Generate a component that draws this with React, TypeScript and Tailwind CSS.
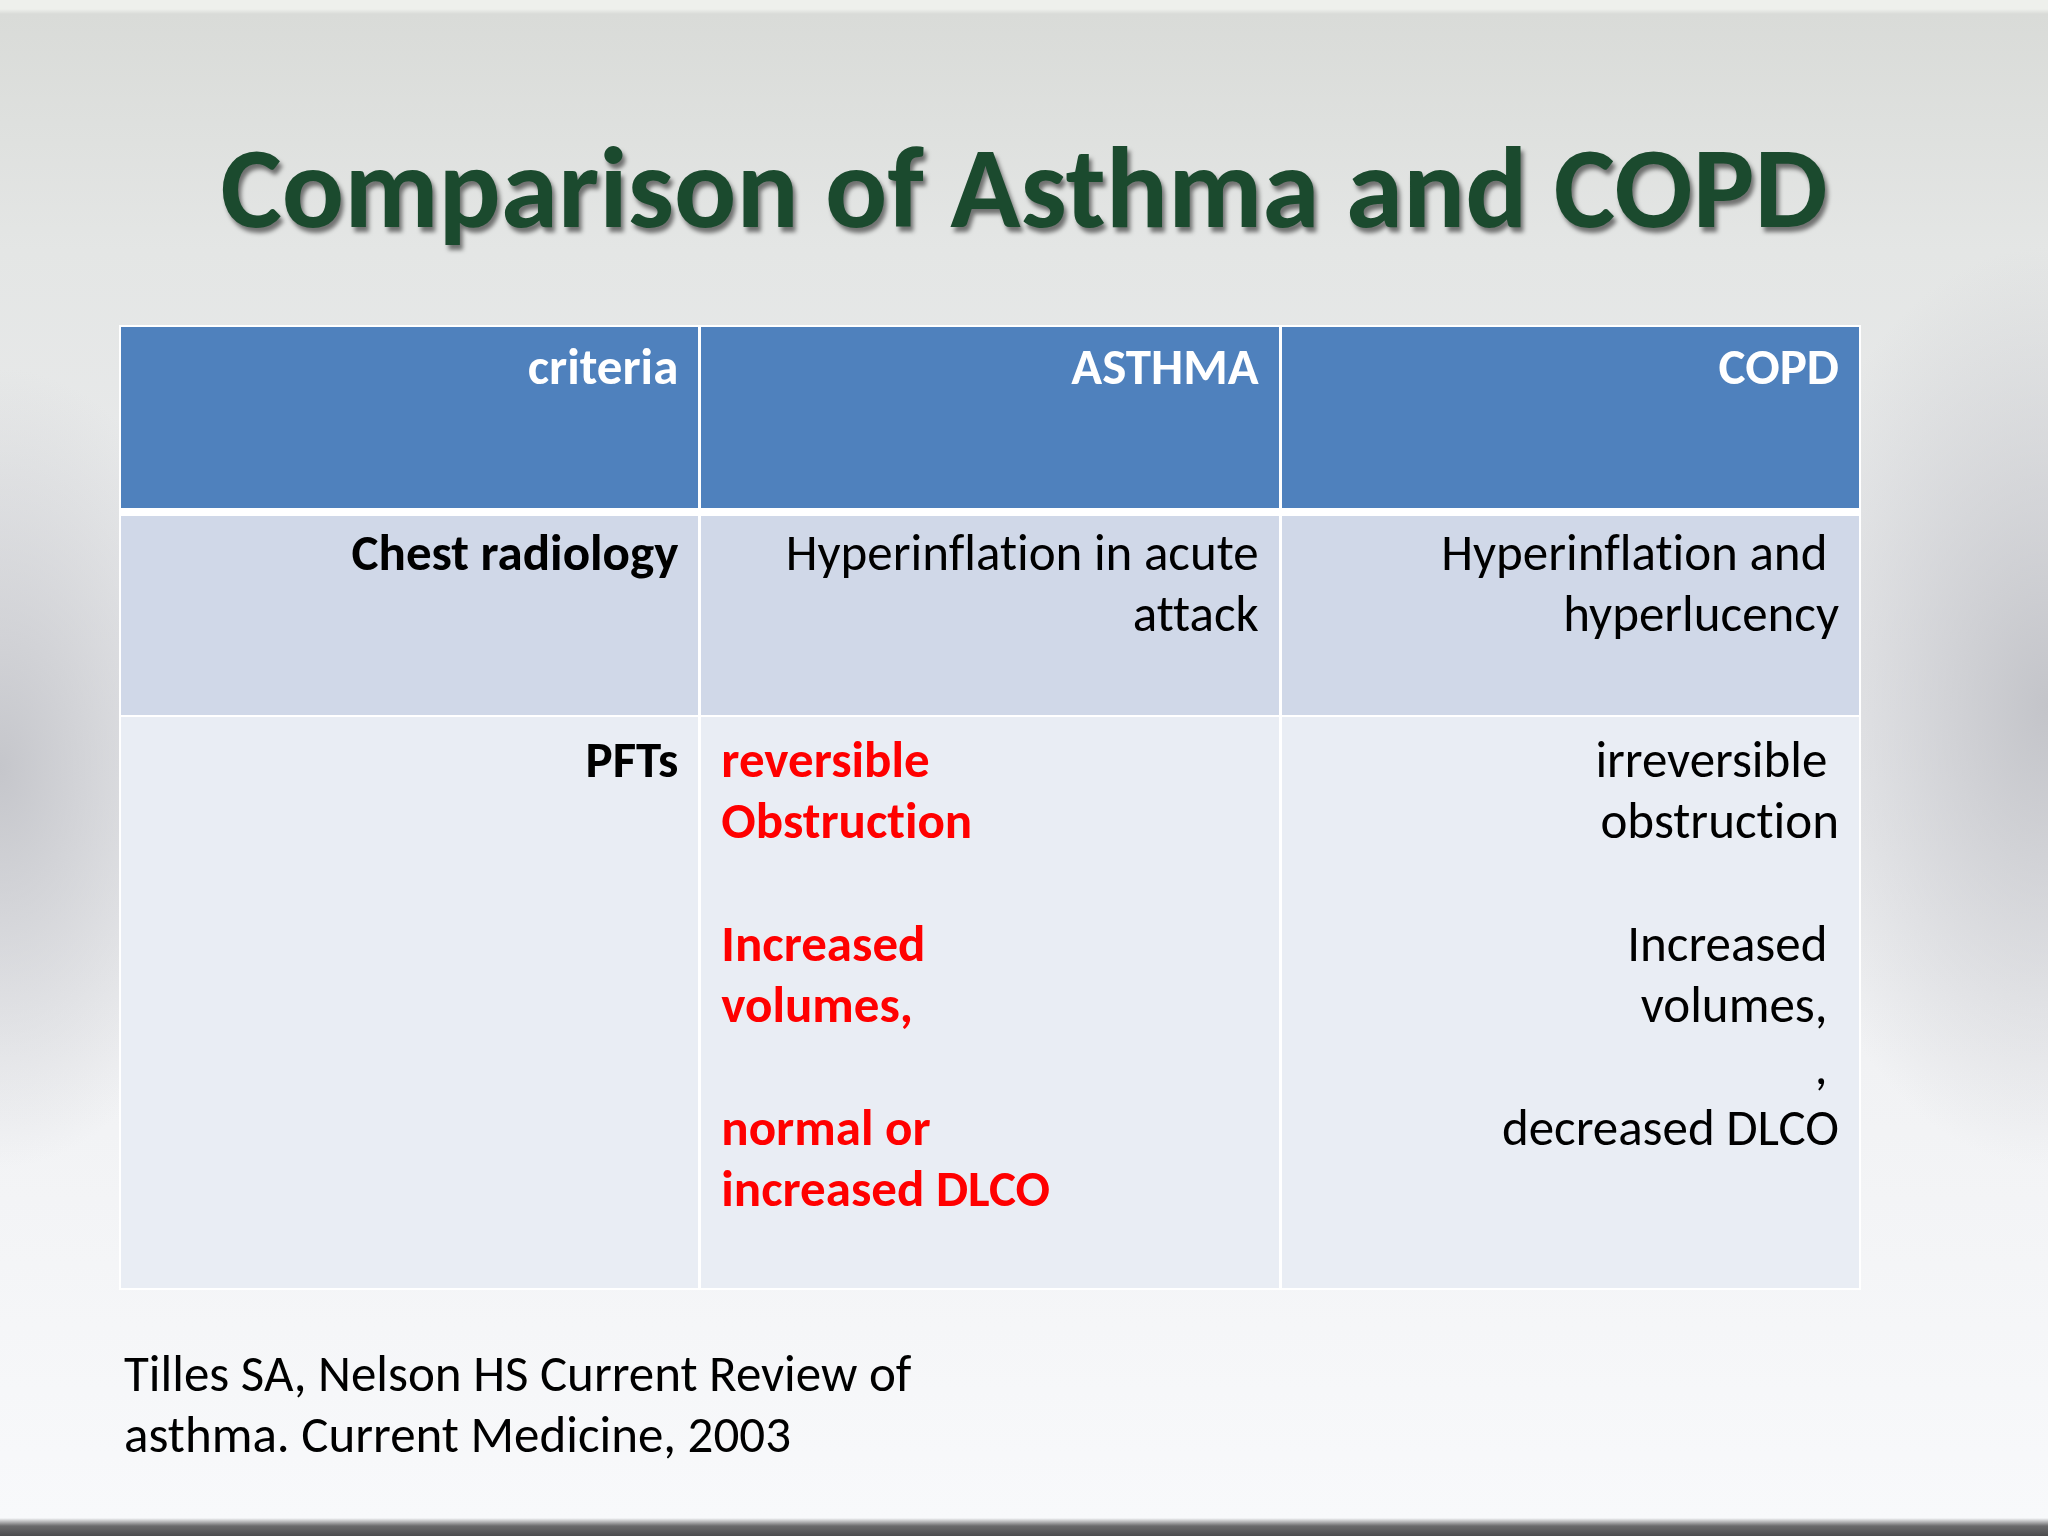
import React from "react";

const font = "font-['Carlito','Lato',sans-serif]";

function HeaderCell({ children }: { children: React.ReactNode }) {
  return (
    <div className="bg-[#4f81bd] pr-[20px] pt-[9px] text-right text-[51px] font-bold leading-[61.3px] text-white">
      {children}
    </div>
  );
}

export default function App() {
  return (
    <div
      className={`${font} flex h-[1536px] w-[2048px] flex-col overflow-hidden [font-variant-ligatures:none] bg-[radial-gradient(ellipse_280px_460px_at_100%_46%,#c3c4c9,transparent),radial-gradient(ellipse_240px_400px_at_0%_50%,#c5c6cb,transparent),linear-gradient(to_bottom,#eef0ec_0px,#eef0ec_9px,#d9dbd8_14px,#e4e6e5_250px,#ebecee_650px,#f3f4f6_1200px,#f8f9fb_1518px,#6a6a6c_1526px,#4c4c4e_1536px)]`}
    >
      <h1 className="mt-[118px] text-center text-[116px] font-bold leading-[1.2] text-[#1b4a2e] [text-shadow:3px_5px_4px_rgba(0,0,0,0.5)]">
        Comparison of Asthma and COPD
      </h1>

      <div className="ml-[119px] mt-[68px] flex w-[1742px] flex-col bg-white p-[2px]">
        <div className="grid h-[181px] grid-cols-3 gap-[3px]">
          <HeaderCell>criteria</HeaderCell>
          <HeaderCell>ASTHMA</HeaderCell>
          <HeaderCell>COPD</HeaderCell>
        </div>

        <div className="mt-[8px] grid h-[199px] grid-cols-3 gap-[3px] text-[51px] leading-[61.3px] text-black">
          <div className="bg-[#d0d8e8] pr-[20px] pt-[6px] text-right font-bold">Chest radiology</div>
          <div className="bg-[#d0d8e8] pr-[20px] pt-[6px] text-right">
            Hyperinflation in acute
            <br />
            attack
          </div>
          <div className="bg-[#d0d8e8] pr-[20px] pt-[6px] text-right">
            Hyperinflation and{"\u00a0"}
            <br />
            hyperlucency
          </div>
        </div>

        <div className="mt-[2px] grid h-[571px] grid-cols-3 gap-[3px] text-[51px] leading-[61.3px] text-black">
          <div className="bg-[#e9edf4] pr-[20px] pt-[12px] text-right font-bold">PFTs</div>
          <div className="bg-[#e9edf4] pl-[20px] pt-[12px] text-left font-bold text-[#ff0000]">
            <div>reversible</div>
            <div>Obstruction</div>
            <div>&nbsp;</div>
            <div>Increased</div>
            <div>volumes,</div>
            <div>&nbsp;</div>
            <div>normal or</div>
            <div>increased DLCO</div>
          </div>
          <div className="bg-[#e9edf4] pr-[20px] pt-[12px] text-right">
            <div>irreversible{"\u00a0"}</div>
            <div>obstruction</div>
            <div>&nbsp;</div>
            <div>Increased{"\u00a0"}</div>
            <div>volumes,{"\u00a0"}</div>
            <div>,{"\u00a0"}</div>
            <div>decreased DLCO</div>
          </div>
        </div>
      </div>

      <p className="ml-[124px] mt-[53px] text-[51px] leading-[61.3px] text-black">
        Tilles SA, Nelson HS Current Review of
        <br />
        asthma. Current Medicine, 2003
      </p>
    </div>
  );
}
